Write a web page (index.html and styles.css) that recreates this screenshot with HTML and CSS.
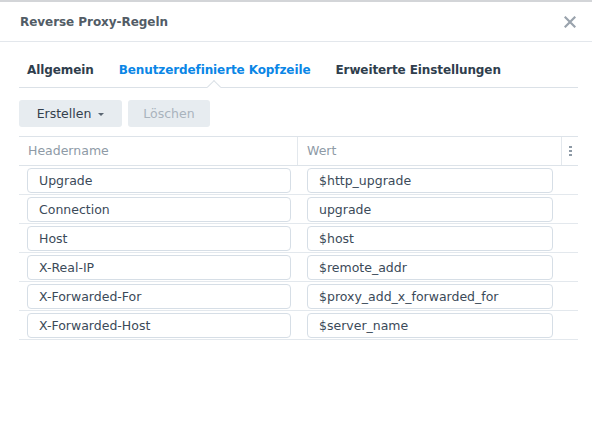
FILE: index.html
```html
<!DOCTYPE html>
<html lang="de">
<head>
<meta charset="utf-8">
<title>Reverse Proxy-Regeln</title>
<link rel="stylesheet" href="styles.css">
</head>
<body>
<div class="dialog">
  <div class="header">
    <div class="title">Reverse Proxy-Regeln</div>
    <div class="close">
      <svg width="12" height="12" viewBox="0 0 12 12"><path d="M1.5 1.5 L10.5 10.5 M10.5 1.5 L1.5 10.5" stroke="#9aa3ad" stroke-width="2.2" stroke-linecap="square"/></svg>
    </div>
  </div>
  <div class="content">
    <div class="tabs">
      <div class="tab">Allgemein</div>
      <div class="tab active">Benutzerdefinierte Kopfzeile</div>
      <div class="tab">Erweiterte Einstellungen</div>
    </div>
    <div class="toolbar">
      <button class="btn btn-create">Erstellen <span class="caret"></span></button>
      <button class="btn btn-disabled">Löschen</button>
    </div>
    <div class="table">
      <div class="thead">
        <div class="th">Headername</div>
        <div class="th">Wert</div>
        <div class="th th-menu"><span class="kebab"><i></i><i></i><i></i></span></div>
      </div>
      <div class="row"><div class="field name">Upgrade</div><div class="field value">$http_upgrade</div></div>
      <div class="row"><div class="field name">Connection</div><div class="field value">upgrade</div></div>
      <div class="row"><div class="field name">Host</div><div class="field value">$host</div></div>
      <div class="row"><div class="field name">X-Real-IP</div><div class="field value">$remote_addr</div></div>
      <div class="row"><div class="field name">X-Forwarded-For</div><div class="field value">$proxy_add_x_forwarded_for</div></div>
      <div class="row"><div class="field name">X-Forwarded-Host</div><div class="field value">$server_name</div></div>
    </div>
  </div>
</div>
</body>
</html>
```
FILE: styles.css
```css
* { box-sizing: border-box; }
html, body { margin: 0; padding: 0; background: #fff; }
body {
  font-family: "DejaVu Sans", Verdana, sans-serif;
  font-size: 12.5px;
  color: #3b4a59;
  width: 592px;
  height: 423px;
  overflow: hidden;
}
.dialog {
  border-top: 2px solid #d3d5d8;
  height: 423px;
}
.header {
  height: 40px;
  border-bottom: 1px solid #e3e7ec;
  display: flex;
  align-items: center;
  justify-content: space-between;
  padding: 1px 14px 0 20px;
}
.title {
  font-weight: bold;
  font-size: 12px;
  letter-spacing: -0.05px;
  color: #525c66;
}
.close { display: flex; align-items: center; width: 12px; height: 12px; margin-right: 2px; }
.content { padding: 0 14px 0 19px; }
.tabs {
  display: flex;
  height: 46px;
  border-bottom: 1px solid #dbe1e7;
  padding-left: 8px;
  padding-top: 20px;
  gap: 25px;
}
.tab {
  position: relative;
  font-weight: bold;
  font-size: 12px;
  letter-spacing: -0.1px;
  color: #2f3e4d;
  height: 25px;
  line-height: 16px;
}
.tab.active { color: #0a86e6; }
.tab.active::after {
  content: "";
  position: absolute;
  left: 50%;
  bottom: -5px;
  width: 9px;
  height: 9px;
  margin-left: -6px;
  background: #fff;
  border-top: 1px solid #dbe1e7;
  border-left: 1px solid #dbe1e7;
  transform: rotate(45deg);
}
.toolbar {
  display: flex;
  gap: 6px;
  margin-top: 12px;
}
.btn {
  font-family: inherit;
  font-size: 12.5px;
  height: 27px;
  border: none;
  border-radius: 3px;
  background: #e7ecf0;
  color: #33404d;
  padding: 0;
  display: flex;
  align-items: center;
  justify-content: center;
}
.btn-create { width: 103px; }
.btn-disabled { width: 82px; color: #a9b3bd; }
.caret {
  display: inline-block;
  width: 0; height: 0;
  border-left: 3.5px solid transparent;
  border-right: 3.5px solid transparent;
  border-top: 3.5px solid #5b6672;
  margin-left: 7px;
  margin-top: 1px;
}
.table {
  margin-top: 9px;
  border-top: 1px solid #dde3e9;
}
.thead {
  display: grid;
  grid-template-columns: 279px 264px 16px;
  height: 29px;
  border-bottom: 1px solid #dde3e9;
}
.th {
  color: #8e9aa6;
  font-size: 12.5px;
  line-height: 28px;
  padding-left: 9px;
  border-right: 1px solid #e3e8ed;
}
.th-menu { border-right: none; padding: 0; display: flex; align-items: center; justify-content: center; }
.kebab { display: flex; flex-direction: column; gap: 2px; }
.kebab i { display: block; width: 3px; height: 2px; background: #8e9aa6; }
.row {
  display: grid;
  grid-template-columns: 279px 264px 16px;
  height: 29px;
  border-bottom: 1px solid #e3e8ed;
  padding-top: 2px;
}
.field {
  height: 25px;
  border: 1px solid #d6dee6;
  border-radius: 4px;
  padding-left: 11px;
  line-height: 23px;
  font-size: 12.5px;
  color: #3b4a59;
  white-space: nowrap;
}
.field.name { margin-left: 8px; width: 264px; }
.field.value { margin-left: 9px; width: 246px; }
```
